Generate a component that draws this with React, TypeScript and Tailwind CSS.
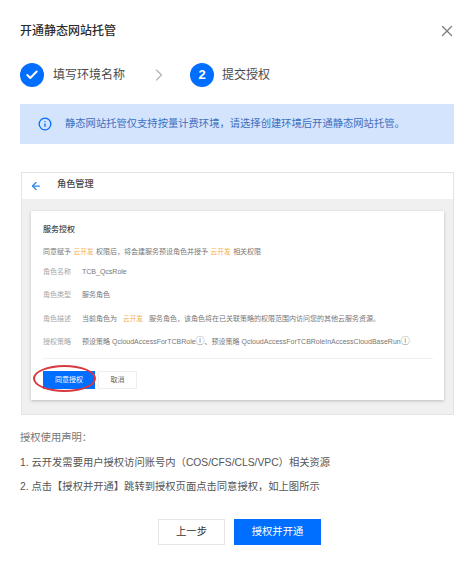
import React from 'react';
import { ArrowLeft, Check, ChevronRight, Info, X } from 'lucide-react';

const font = '[font-family:"Liberation_Sans","Noto_Sans_CJK_SC",sans-serif]';

function Orange({ children, wide }: { children: React.ReactNode; wide?: boolean }) {
  return <span className={`text-[6.7px] text-[#f5b04d] ${wide ? 'mx-[6px]' : 'mx-[2.5px]'}`}>{children}</span>;
}

function RoleRow({ label, children, className }: { label: string; children: React.ReactNode; className: string }) {
  return (
    <div className={`flex items-center h-[10px] ${className}`}>
      <span className="w-[39px] shrink-0 text-[#a5a5a5]">{label}</span>
      <span className="whitespace-nowrap text-[#777]">{children}</span>
    </div>
  );
}

export default function App() {
  return (
    <div className={`w-[474px] h-[565px] bg-white overflow-hidden px-[20px] pt-[23px] ${font}`}>
      {/* 标题 */}
      <div className="flex items-center justify-between h-[16px]">
        <h1 className="text-[12px] font-medium text-[#2b2b2b]">开通静态网站托管</h1>
        <X className="w-[18px] h-[18px] text-[#7f7f7f] -mr-[2px]" strokeWidth={1.8} />
      </div>

      {/* 步骤 */}
      <div className="flex items-center h-[24px] mt-[24px]">
        <div className="w-[24px] h-[24px] rounded-full bg-[#006eff] flex items-center justify-center">
          <Check className="w-[14px] h-[14px] text-white" strokeWidth={3.5} />
        </div>
        <span className="ml-[9px] text-[12px] text-[#4a4a4a]">填写环境名称</span>
        <ChevronRight className="ml-[24px] w-[20px] h-[20px] text-[#b5b5b5]" strokeWidth={1.5} />
        <div className="ml-[21px] w-[24px] h-[24px] rounded-full bg-[#006eff] flex items-center justify-center text-white text-[13px] font-bold">
          2
        </div>
        <span className="ml-[8px] text-[12px] text-[#4a4a4a]">提交授权</span>
      </div>

      {/* 提示 */}
      <div className="flex items-center h-[40px] mt-[17px] bg-[#d4e4fc] pl-[18px]">
        <Info className="w-[14px] h-[14px] text-[#006eff]" strokeWidth={2.2} />
        <span className="ml-[13px] text-[10.3px] text-[#3d6fc0] whitespace-nowrap">
          {'静态网站托管仅支持按量计费环境\uFF0C请选择创建环境后开通静态网站托管\u3002'}
        </span>
      </div>

      {/* 截图区域 */}
      <div className="ml-[1px] mt-[28px] h-[243px] border border-[#e4e4e4] bg-[#f0f0f0]">
        <div className="flex items-center h-[26px] bg-white pl-[8px]">
          <ArrowLeft className="w-[12px] h-[12px] text-[#2e86e8]" strokeWidth={2.5} />
          <span className="ml-[15px] text-[9.2px] font-medium text-[#444] relative -top-[1px]">角色管理</span>
        </div>
        <div className="relative mx-[9px] mt-[12px] h-[189px] bg-white shadow-[0_1px_3px_rgba(0,0,0,0.22)] px-[12px] pt-[14px] text-[7px]">
          <div className="h-[10px] flex items-center text-[8px] font-medium text-[#444]">服务授权</div>
          <div className="h-[10px] mt-[12px] flex items-center whitespace-nowrap text-[#777]">
            <span>
              同意赋予<Orange>云开发</Orange>{'权限后\uFF0C将会建服务预设角色并授予'}<Orange>云开发</Orange>相关权限
            </span>
          </div>
          <RoleRow label="角色名称" className="mt-[10px]">TCB_QcsRole</RoleRow>
          <RoleRow label="角色类型" className="mt-[13px]">服务角色</RoleRow>
          <RoleRow label="角色描述" className="mt-[14px]">
            当前角色为<Orange wide>云开发</Orange>{'服务角色\uFF0C该角色将在已关联策略的权限范围内访问您的其他云服务资源\u3002'}
          </RoleRow>
          <RoleRow label="授权策略" className="mt-[13px]">
            预设策略 QcloudAccessForTCBRole<span className="text-[9px] leading-none">ⓘ</span>{'\u3001预设策略 '}QcloudAccessForTCBRoleInAccessCloudBaseRun<span className="text-[9px] leading-none">ⓘ</span>
          </RoleRow>
          <div className="h-px bg-[#f0f0f0] mt-[11px] -mr-[1px]" />
          <div className="flex mt-[12px] gap-[3px]">
            <div className="w-[52px] h-[18px] bg-[#006eff] text-white flex items-center justify-center">同意授权</div>
            <div className="w-[39px] h-[18px] border border-[#eeeeee] text-[#666] flex items-center justify-center">取消</div>
          </div>
          {/* 红色圈 */}
          <div className="absolute left-[2px] top-[154px] w-[63px] h-[27px] rounded-[50%] border-2 border-[#d8393f]" />
        </div>
      </div>

      {/* 声明 */}
      <div className="mt-[15px] text-[10.3px] leading-[16px] text-[#777]">{'授权使用声明\uFF1A'}</div>
      <div className="mt-[9px] text-[10.3px] leading-[16px] text-[#555]">{'1. 云开发需要用户授权访问账号内\uFF08COS/CFS/CLS/VPC\uFF09相关资源'}</div>
      <div className="mt-[8px] text-[10.3px] leading-[16px] text-[#555]">{'2. 点击\u3010授权并开通\u3011跳转到授权页面点击同意授权\uFF0C如上图所示'}</div>

      {/* 底部按钮 */}
      <div className="flex mt-[24px] ml-[138px] gap-[9px]">
        <div className="w-[67px] h-[26px] border border-[#e5e5e5] text-[10.3px] text-[#333] flex items-center justify-center">上一步</div>
        <div className="w-[87px] h-[26px] bg-[#006eff] text-[10.3px] text-white flex items-center justify-center">授权并开通</div>
      </div>
    </div>
  );
}
